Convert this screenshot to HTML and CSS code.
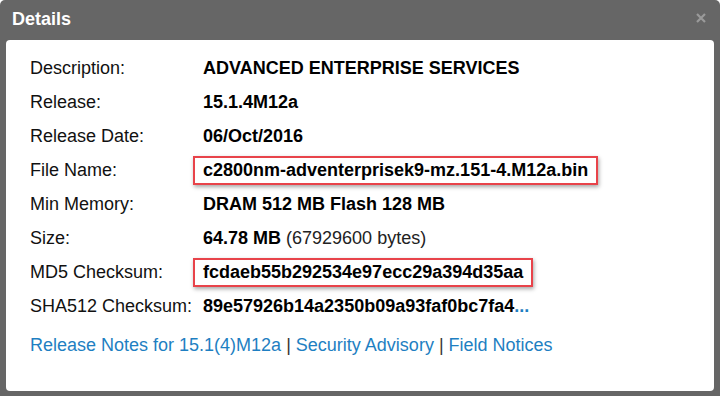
FILE: index.html
```html
<!DOCTYPE html>
<html lang="en">
<head>
    <meta charset="UTF-8">
    <title>Details</title>
    <link rel="stylesheet" href="styles.css">
</head>
<body>
    <!-- dialog -->
    <div class="dialog">
        <div class="dialog-head">
            <span class="dialog-title">Details</span>
            <svg class="dialog-close" width="10" height="10" viewBox="0 0 10 10">
                <path d="M1 1 L9 9 M9 1 L1 9" stroke="#9a9a9a" stroke-width="2.2" fill="none"/>
            </svg>
        </div>
        <div class="dialog-body">
            <div class="details">
                <div class="label">Description:</div>
                <div class="value">ADVANCED ENTERPRISE SERVICES</div>

                <div class="label">Release:</div>
                <div class="value">15.1.4M12a</div>

                <div class="label">Release Date:</div>
                <div class="value">06/Oct/2016</div>

                <div class="label">File Name:</div>
                <div class="value"><span class="mark">c2800nm-adventerprisek9-mz.151-4.M12a.bin</span></div>

                <div class="label">Min Memory:</div>
                <div class="value">DRAM 512 MB Flash 128 MB</div>

                <div class="label">Size:</div>
                <div class="value">64.78 MB <span class="normal">(67929600 bytes)</span></div>

                <div class="label">MD5 Checksum:</div>
                <div class="value"><span class="mark">fcdaeb55b292534e97ecc29a394d35aa</span></div>

                <div class="label">SHA512 Checksum:</div>
                <div class="value">89e57926b14a2350b09a93faf0bc7fa4<a class="more" href="javascript:;">...</a></div>
            </div>
            <div class="links">
                <a href="javascript:;">Release Notes for 15.1(4)M12a</a> |
                <a href="javascript:;">Security Advisory</a> |
                <a href="javascript:;">Field Notices</a>
            </div>
        </div>
    </div>
</body>
</html>
```
FILE: styles.css
```css
* {
    margin: 0;
    padding: 0;
}

body {
    font-family: "Liberation Sans", Arial, sans-serif;
    background-color: #fff;
}

/* outer dark frame */
.dialog {
    width: 720px;
    height: 396px;
    box-sizing: border-box;
    background-color: #666;
    border-radius: 5px 5px 0 0;
    padding: 0 6px 5px 6px;
    display: flex;
    flex-direction: column;
}

.dialog-head {
    height: 40px;
    display: flex;
    align-items: center;
    justify-content: space-between;
    padding: 0 8px 0 6px;
}

.dialog-title {
    color: #fff;
    font-size: 18px;
    font-weight: bold;
    margin-top: -2px;
}

.dialog-close {
    margin-top: -4px;
}

.dialog-body {
    flex: 1;
    background-color: #fff;
    border-radius: 4px;
    padding: 11px 24px 0 24px;
    font-size: 18px;
    color: #111;
}

/* label / value grid */
.details {
    display: grid;
    grid-template-columns: 173px 1fr;
    grid-auto-rows: 34px;
    align-items: center;
}

.value {
    font-weight: bold;
    color: #000;
}

.normal {
    font-weight: normal;
    color: #222;
}

/* red highlight box */
.mark {
    display: inline-block;
    border: 2px solid #e8434a;
    padding: 2px 8px 2px 8px;
    margin-left: -10px;
    box-shadow: 1px 2px 4px rgba(0, 0, 0, 0.35);
}

a {
    color: #1e7fc2;
    text-decoration: none;
}

.more {
    font-weight: bold;
}

.links {
    margin-top: 5px;
    line-height: 34px;
    color: #333;
}
```
